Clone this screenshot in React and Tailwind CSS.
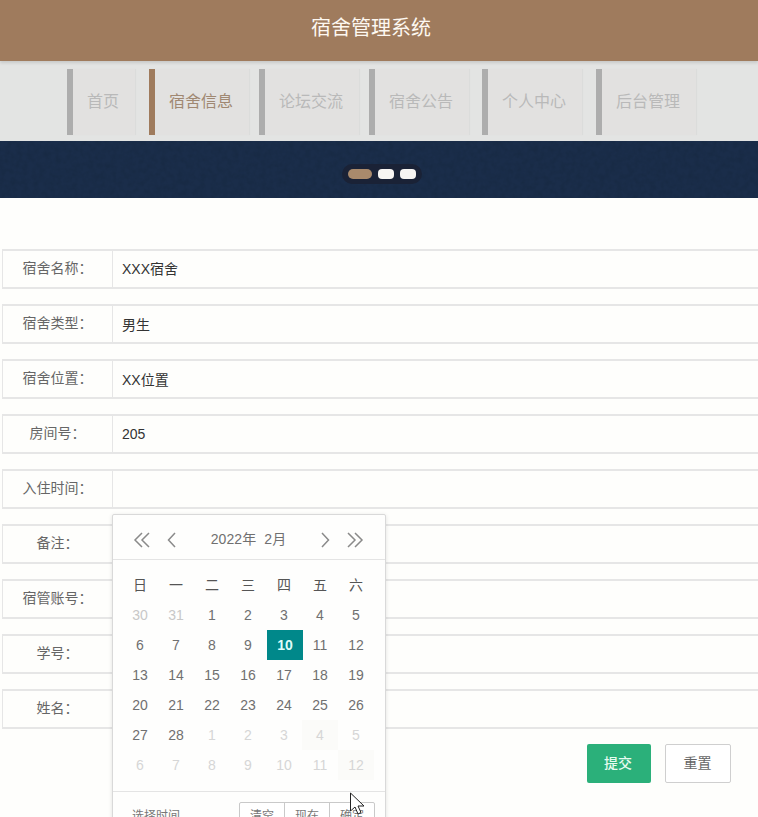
import React from "react";

const font = { fontFamily: '"Liberation Sans", "Noto Sans CJK SC", sans-serif' };

const nav = [
  { t: "首页", m: "mr-[14px]" },
  { t: "宿舍信息", m: "mr-[10px]", on: true },
  { t: "论坛交流", m: "mr-[10px]" },
  { t: "宿舍公告", m: "mr-[13px]" },
  { t: "个人中心", m: "mr-[14px]" },
  { t: "后台管理", m: "" },
];

const rows = [
  ["宿舍名称：", "XXX宿舍", "leading-[37px]"],
  ["宿舍类型：", "男生", "leading-[38px]"],
  ["宿舍位置：", "XX位置", "leading-[38px]"],
  ["房间号：", "205", "leading-[37px]"],
  ["入住时间：", "", ""],
  ["备注：", "", ""],
  ["宿管账号：", "", ""],
  ["学号：", "", ""],
  ["姓名：", "", ""],
];

const week = ["日", "一", "二", "三", "四", "五", "六"];
const days = [
  30, 31, 1, 2, 3, 4, 5, 6, 7, 8, 9, 10, 11, 12, 13, 14, 15, 16, 17, 18, 19, 20, 21, 22, 23, 24, 25, 26, 27, 28, 1, 2, 3, 4, 5, 6, 7, 8, 9, 10, 11, 12,
];

function Chevron({ dbl, right }) {
  return (
    <svg width={dbl ? 20 : 12} height="18" viewBox={dbl ? "0 0 20 18" : "0 0 12 18"} fill="none" stroke="#8a8a8a" strokeWidth="1.5" className={right ? "rotate-180" : ""}>
      <path d={dbl ? "M10 2 3 9l7 7" : "M9 2 2.500 9 9 16"} />
      {dbl && <path d="M17 2 10 9l7 7" />}
    </svg>
  );
}

function Calendar() {
  return (
    <div className="absolute left-[112px] top-[514px] w-[274px] h-[320px] bg-[#fefefd] border border-[#d9d9d9] rounded-[2px] shadow-[0_1px_4px_rgba(0,0,0,0.12)]">
      <div className="h-[45px] border-b border-[#e4e4e4] relative flex items-center text-[14px] text-[#707070]">
        <span className="absolute left-[19px] top-[16px] flex"><Chevron dbl /></span>
        <span className="absolute left-[53px] top-[16px] flex"><Chevron /></span>
        <span className="w-full text-center pt-[4px] pr-[1px] tracking-[0.1px]">2022年&nbsp;&nbsp;2月</span>
        <span className="absolute left-[206px] top-[16px] flex"><Chevron right /></span>
        <span className="absolute left-[232px] top-[16px] flex"><Chevron dbl right /></span>
      </div>
      <div className="px-[9px] pt-[10px] h-[232px] border-b border-[#e4e4e4]">
        <div className="grid grid-cols-[repeat(7,36px)] auto-rows-[30px] text-[14px] text-center leading-[30px]">
          {week.map((w) => (
            <div key={w} className="text-[#555]">{w}</div>
          ))}
          {days.map((d, i) => {
            const prev = i < 2;
            const next = i >= 30;
            const sel = i === 11;
            const hover = i === 33 || i === 41;
            return (
              <div
                key={i}
                className={
                  sel
                    ? "relative left-[1px] bg-[#00888a] text-[#dffcf9] font-bold"
                    : prev
                    ? "text-[#c8c8c8]"
                    : next
                    ? hover
                      ? "text-[#d6d6d6] bg-[#fbfbf9]"
                      : "text-[#d6d6d6]"
                    : "text-[#707070]"
                }
              >
                {d}
              </div>
            );
          })}
        </div>
      </div>
      <div className="relative flex items-start pl-[19px] pt-[15px] text-[12px] text-[#777]">
        <span>选择时间</span>
        <div className="absolute left-[126px] top-[10px] flex h-[26px] border border-[#c9c9c9] rounded-[2px] bg-white">
          <span className="w-[45px] text-center leading-[26px] border-r border-[#c9c9c9]">清空</span>
          <span className="w-[45px] text-center leading-[26px] border-r border-[#c9c9c9]">现在</span>
          <span className="w-[44px] text-center leading-[26px]">确定</span>
        </div>
      </div>
    </div>
  );
}

export default function App() {
  return (
    <div className="relative w-[758px] h-[817px] overflow-hidden bg-[#fefefc]" style={font}>
      <header className="h-[61px] bg-[#9f7b5d] flex items-center justify-center pb-[5px] pr-[16px] text-[20px] text-[#fdf8f1] relative z-10 shadow-[0_2px_3px_rgba(0,0,0,0.12)]">
        宿舍管理系统
      </header>
      <nav className="h-[80px] bg-[#e3e4e3] flex pt-[8px] pl-[67px]">
        {nav.map((n) => (
          <div
            key={n.t}
            className={`${n.m} h-[66px] pl-[14px] pr-[16px] border-l-[6px] flex items-center text-[16px] bg-[#e2e1e0] shadow-[1px_0_1px_rgba(0,0,0,0.03)] ${
              n.on ? "border-[#9f7b5d] text-[#a08872]" : "border-[#adadad] text-[#b9b9b9]"
            }`}
          >
            {n.t}
          </div>
        ))}
      </nav>
      <div className="relative h-[57px] bg-[#1a2d4a] overflow-hidden flex items-center justify-center pl-[5px] pt-[9px]">
        <svg className="absolute inset-0" width="758" height="57">
          <filter id="n" colorInterpolationFilters="sRGB">
            <feTurbulence type="fractalNoise" baseFrequency="0.18" numOctaves="3" />
            <feColorMatrix values="0 0 0 0 0.08  0 0 0 0 0.15  0 0 0 0 0.24  0 0 0 0.9 -0.3" />
          </filter>
          <rect width="758" height="57" filter="url(#n)" />
        </svg>
        <div className="relative flex gap-[6px] px-[6px] py-[5px] rounded-full bg-[#1a2236]">
          <span className="w-[24px] h-[10px] rounded-[5px] bg-[#a98a6c]" />
          <span className="w-[16px] h-[10px] rounded-[4px] bg-[#f7f5f2]" />
          <span className="w-[16px] h-[10px] rounded-[4px] bg-[#f7f5f2]" />
        </div>
      </div>
      <form className="pt-[51px] pl-[2px] flex flex-col gap-[15px]">
        {rows.map(([l, v, lead]) => (
          <div key={l} className="flex h-[40px] w-[800px] border border-[#e6e6e6] border-t-2 border-b-2 bg-[#fefefc]">
            <div className="w-[110px] shrink-0 border-r border-[#e6e6e6] text-center text-[14px] leading-[34px] text-[#666]">{l}</div>
            <div className={`pl-[9px] text-[14px] text-[#333] ${lead}`}>{v}</div>
          </div>
        ))}
      </form>
      <div className="absolute left-[587px] top-[744px] flex gap-[14px]">
        <button type="button" className="w-[64px] h-[39px] pr-[2px] rounded-[2px] bg-[#2bb07a] text-[14px] text-[#e6fbf0] font-medium">提交</button>
        <button type="button" className="w-[66px] h-[39px] pr-[1px] rounded-[2px] border border-[#cfcfcf] bg-white text-[14px] text-[#666]">重置</button>
      </div>
      <Calendar />
      <svg className="absolute left-[349px] top-[792px]" width="16" height="24" viewBox="0 0 16 24">
        <path d="M1.500 1v18l4.500-4 3 7 3-1.500-3-6.500h6z" fill="#fff" stroke="#222" strokeWidth="1" />
      </svg>
    </div>
  );
}
